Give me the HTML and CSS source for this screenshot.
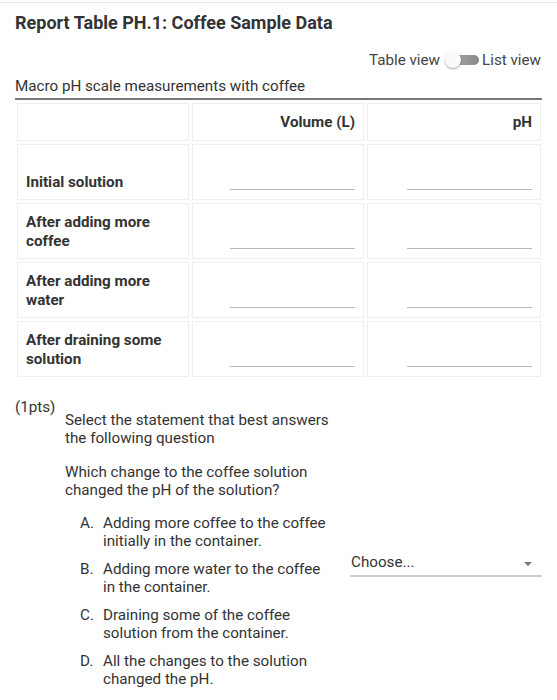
FILE: index.html
```html
<!DOCTYPE html>
<html>
<head>
<meta charset="utf-8">
<link rel="stylesheet" href="styles.css">
</head>
<body>
<div class="page">
  <h1 class="title">Report Table PH.1: Coffee Sample Data</h1>
  <div class="toggle-row">
    <span class="toggle-label">Table view</span>
    <span class="switch"><span class="track"></span><span class="thumb"></span></span>
    <span class="toggle-label">List view</span>
  </div>
  <div class="caption">Macro pH scale measurements with coffee</div>
  <table class="data">
    <thead>
      <tr>
        <th class="c1"></th>
        <th class="c2">Volume (L)</th>
        <th class="c3">pH</th>
      </tr>
    </thead>
    <tbody>
      <tr>
        <td class="label">Initial solution</td>
        <td class="val"><span class="blank"></span></td>
        <td class="val"><span class="blank"></span></td>
      </tr>
      <tr>
        <td class="label">After adding more<br>coffee</td>
        <td class="val"><span class="blank"></span></td>
        <td class="val"><span class="blank"></span></td>
      </tr>
      <tr>
        <td class="label">After adding more<br>water</td>
        <td class="val"><span class="blank"></span></td>
        <td class="val"><span class="blank"></span></td>
      </tr>
      <tr>
        <td class="label">After draining some<br>solution</td>
        <td class="val"><span class="blank"></span></td>
        <td class="val"><span class="blank"></span></td>
      </tr>
    </tbody>
  </table>

  <div class="points">(1pts)</div>
  <div class="question">
    <div class="q-left">
      <p class="q-text">Select the statement that best answers<br>the following question</p>
      <p class="q-text">Which change to the coffee solution<br>changed the pH of the solution?</p>
      <ol class="options">
        <li><span class="letter">A.</span><span class="opt">Adding more coffee to the coffee<br>initially in the container.</span></li>
        <li><span class="letter">B.</span><span class="opt">Adding more water to the coffee<br>in the container.</span></li>
        <li><span class="letter">C.</span><span class="opt">Draining some of the coffee<br>solution from the container.</span></li>
        <li><span class="letter">D.</span><span class="opt">All the changes to the solution<br>changed the pH.</span></li>
      </ol>
    </div>
    <div class="q-right">
      <div class="select">
        <span class="select-text">Choose...</span>
        <span class="caret"></span>
      </div>
    </div>
  </div>
</div>
</body>
</html>
```
FILE: styles.css
```css
html, body {
  margin: 0;
  padding: 0;
  background: #fff;
}
body {
  font-family: Roboto, "Liberation Sans", Arial, sans-serif;
  color: #333;
  border-top: 1px solid #e6e6e6;
  margin-top: 2px;
}
.page {
  padding: 0 15px 0 15px;
}
.title {
  font-size: 18px;
  font-weight: 700;
  color: #333;
  margin: 0;
  padding-top: 9px;
  line-height: 21px;
}
.toggle-row {
  display: flex;
  justify-content: flex-end;
  align-items: center;
  margin-top: 17px;
  height: 20px;
  padding-right: 1px;
}
.toggle-label {
  font-size: 15.2px;
  color: #444;
}
.switch {
  position: relative;
  width: 35px;
  height: 20px;
  margin: 0 3px 0 4px;
}
.track {
  position: absolute;
  left: 9px;
  top: 5px;
  width: 26px;
  height: 10px;
  border-radius: 5px;
  background: linear-gradient(to right, #a3a3a3, #8a8a8a);
}
.thumb {
  position: absolute;
  left: 1px;
  top: 2px;
  width: 16px;
  height: 16px;
  border-radius: 50%;
  background: #fafafa;
  box-shadow: 0 1px 2px rgba(0,0,0,0.35);
}
.caption {
  font-size: 15.2px;
  color: #333;
  margin-top: 7px;
  line-height: 19px;
  padding-bottom: 2px;
  border-bottom: 2px solid #777;
}
.data {
  width: 530px;
  border-collapse: separate;
  border-spacing: 3px;
  margin-top: 0;
  margin-left: -1px;
  table-layout: fixed;
}
.data th, .data td {
  border: 1px solid #eeeeee;
}
.data th {
  height: 38px;
  box-sizing: border-box;
  font-size: 15.2px;
  font-weight: 700;
  text-align: right;
  padding: 0 8px;
  color: #333;
}
.c1 { width: 172px; }
.c2 { width: 172px; }
.data td {
  height: 56px;
  box-sizing: border-box;
  padding: 0 8px 7px 8px;
  vertical-align: bottom;
}
.label {
  font-size: 15.2px;
  font-weight: 700;
  line-height: 19px;
  text-align: left;
  color: #333;
}
.val {
  text-align: right;
}
.blank {
  display: inline-block;
  vertical-align: bottom;
  width: 125px;
  height: 1px;
  background: #b8b8b8;
  margin-bottom: 2px;
}
.points {
  font-size: 15.2px;
  margin-top: 18px;
  line-height: 18px;
}
.question {
  display: flex;
  align-items: flex-start;
}
.q-left {
  width: 285px;
  padding-left: 50px;
}
.q-text {
  font-size: 15.2px;
  line-height: 18px;
  margin: -5px 0 16px 0;
}
.q-text + .q-text {
  margin-top: 0;
  margin-bottom: 15px;
}
.options {
  list-style: none;
  margin: 0;
  padding: 0 0 0 15px;
}
.options li {
  display: flex;
  font-size: 15.2px;
  line-height: 18px;
  margin-bottom: 10px;
}
.letter {
  width: 23px;
  flex: none;
}
.opt {
  flex: 1;
}
.q-right {
  flex: 1;
  margin-top: 137px;
}
.select {
  display: flex;
  align-items: center;
  justify-content: space-between;
  border-bottom: 2px solid #cccccc;
  height: 22px;
  padding: 0 10px 0 1px;
}
.select-text {
  font-size: 15.2px;
  color: #333;
  margin-top: -4px;
}
.caret {
  width: 0;
  height: 0;
  border-left: 4px solid transparent;
  border-right: 4px solid transparent;
  border-top: 4px solid #777;
}
```
